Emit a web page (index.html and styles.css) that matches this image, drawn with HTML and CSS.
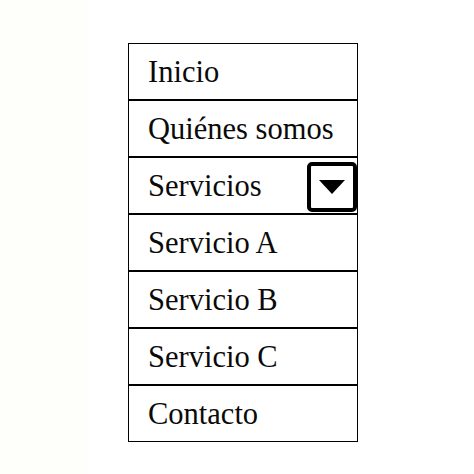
FILE: index.html
```html
<!DOCTYPE html>
<html>
<head>
  <title>Menú</title>
  <meta charset="UTF-8">
  <link rel="stylesheet" href="styles.css">
</head>
<body>
  <div class="page">
    <div class="side"></div>
    <nav class="menu">
      <ul>
        <li>Inicio</li>
        <li>Quiénes somos</li>
        <li class="has-sub">
          <span>Servicios</span>
          <button class="toggle" aria-label="Abrir submenú">
            <svg width="26" height="14" viewBox="0 0 26 14"><polygon points="0,0 26,0 13,14" fill="#000"/></svg>
          </button>
        </li>
        <li>Servicio A</li>
        <li>Servicio B</li>
        <li>Servicio C</li>
        <li>Contacto</li>
      </ul>
    </nav>
  </div>
</body>
</html>
```

FILE: styles.css
```css
body {
  margin: 0;
  background: #ffffff;
  color: #0a0a0a;
  font-family: 'Liberation Serif', 'Times New Roman', serif;
}
.page {
  display: flex;
  min-height: 474px;
}
.side {
  width: 87px;
  background: #fefefa;
}
.menu {
  margin: 43px 0 0 41px;
  width: 230px;
}
.menu ul {
  list-style: none;
  margin: 0;
  padding: 0;
}
.menu li {
  border: 1px solid #000;
  height: 53px;
  padding-top: 2px;
  line-height: 53px;
  font-size: 30.5px;
  padding-left: 19px;
  display: flex;
  align-items: center;
  justify-content: space-between;
}
.toggle {
  box-sizing: border-box;
  width: 50px;
  height: 50px;
  border: 4px solid #000;
  border-radius: 5px;
  background: #fff;
  padding: 0;
  display: flex;
  align-items: center;
  justify-content: center;
  cursor: pointer;
}
.toggle svg {
  display: block;
  margin-top: 1px;
}
```
